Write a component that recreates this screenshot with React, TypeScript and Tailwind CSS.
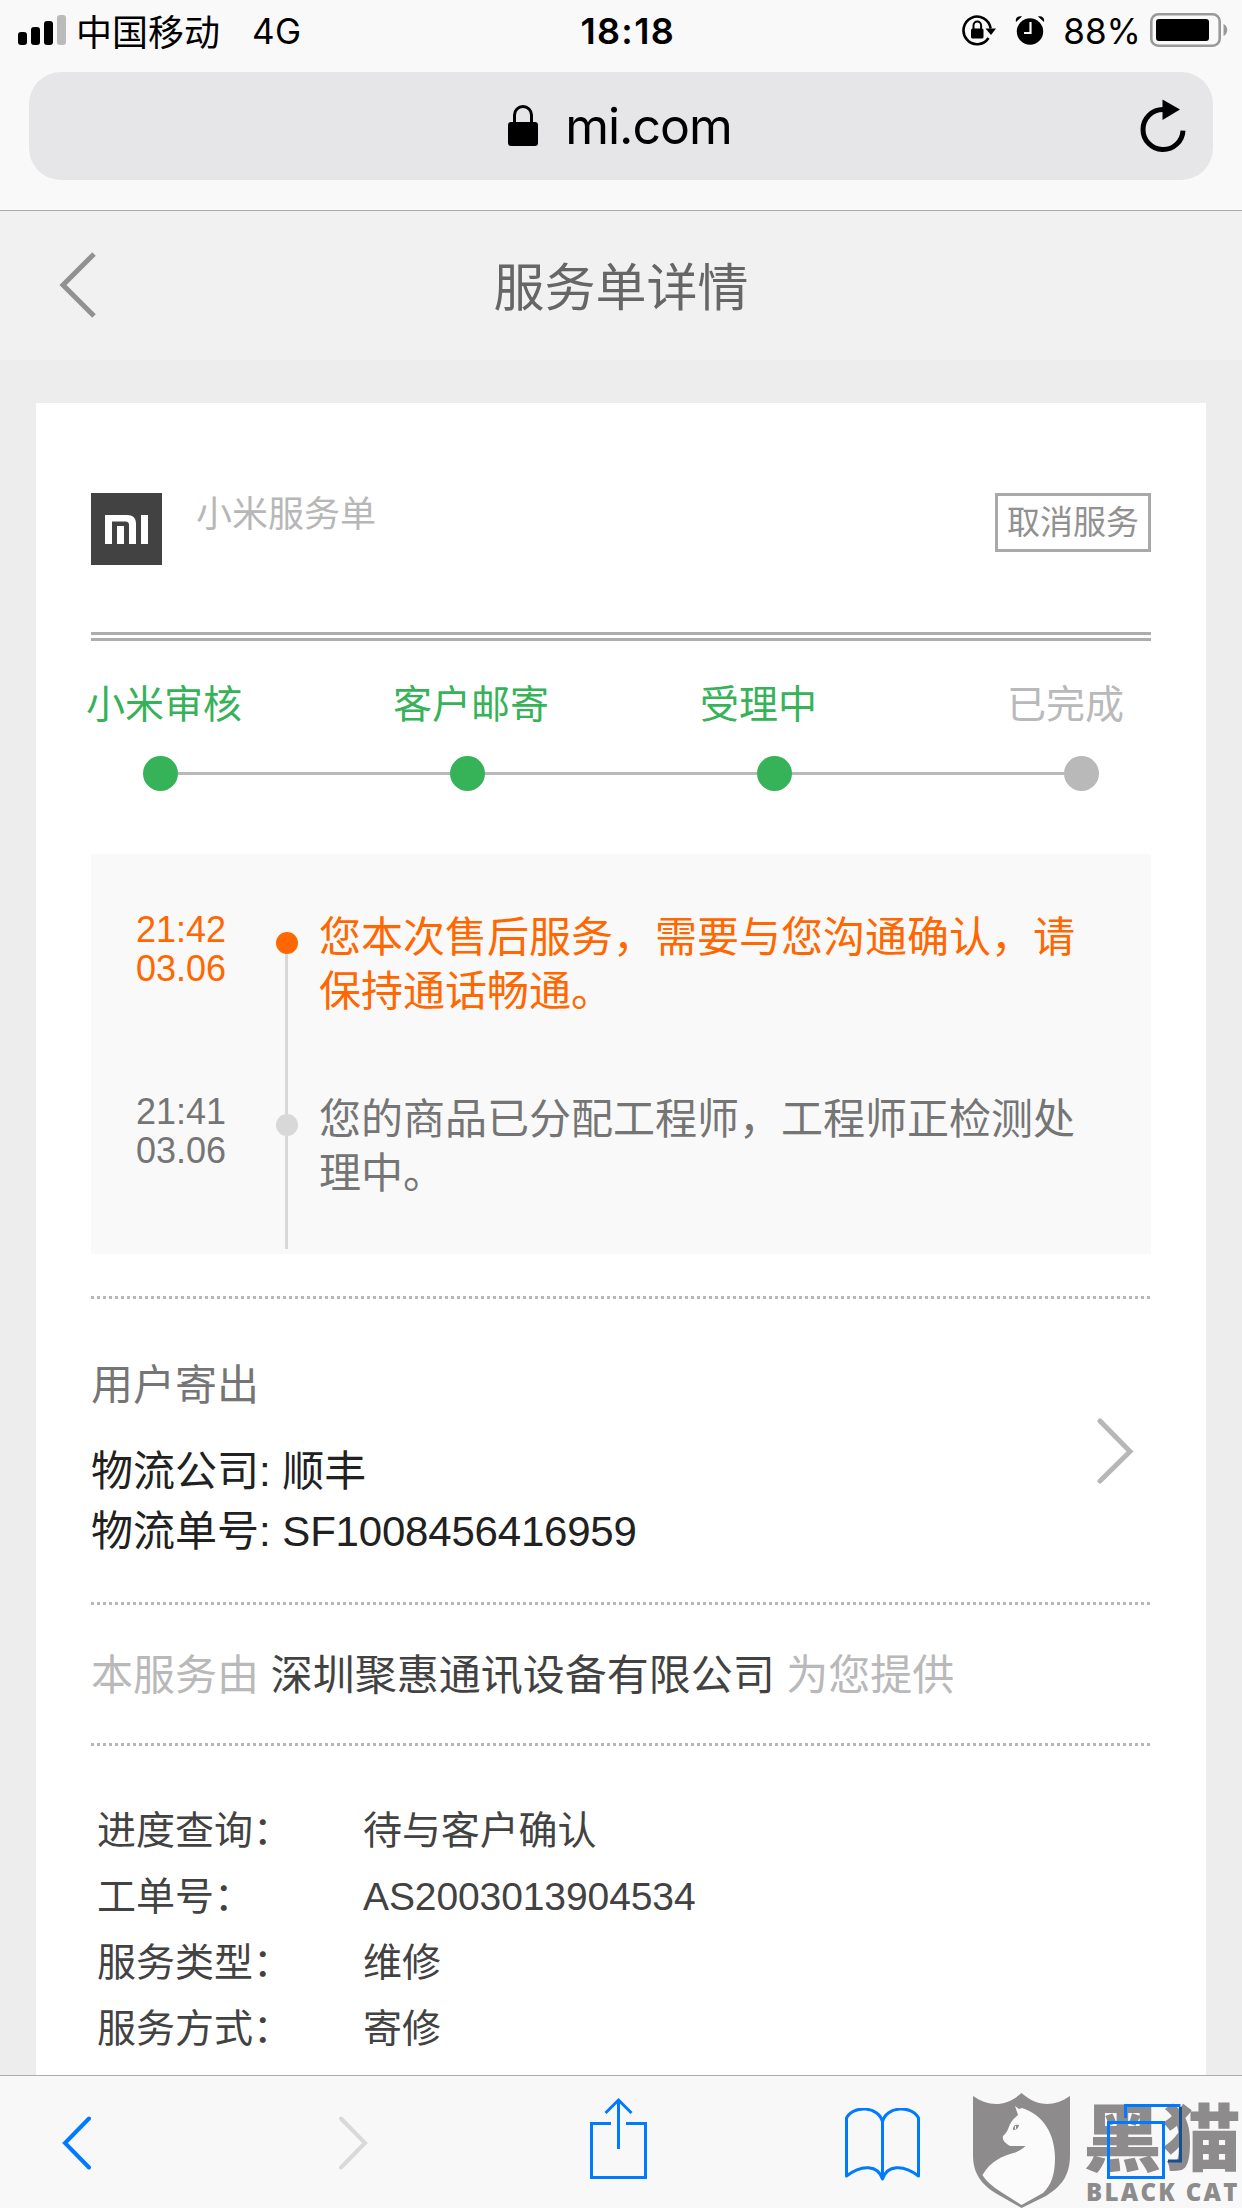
import React from "react";

const steps = [
  { label: "小米审核", done: true },
  { label: "客户邮寄", done: true },
  { label: "受理中", done: true },
  { label: "已完成", done: false },
];

const details = [
  { label: "进度查询：", value: "待与客户确认" },
  { label: "工单号：", value: "AS2003013904534" },
  { label: "服务类型：", value: "维修" },
  { label: "服务方式：", value: "寄修" },
];

function StatusBar() {
  return (
    <div className="flex h-[60px] items-center font-['Inter','Noto_Sans_CJK_SC',sans-serif] text-[36px] leading-[60px] text-black">
      <div className="flex flex-1 items-center pl-[18px]">
        <div className="flex h-[30px] items-end gap-[4px]">
          <span className="h-[13px] w-[9px] rounded-[3px] bg-black" />
          <span className="h-[18px] w-[9px] rounded-[3px] bg-black" />
          <span className="h-[24px] w-[9px] rounded-[3px] bg-black" />
          <span className="h-[30px] w-[9px] rounded-[3px] bg-[#bbbbbb]" />
        </div>
        <span className="ml-[10px] mt-[-1px] font-['Noto_Sans_CJK_SC',sans-serif]">中国移动</span>
        <span className="ml-[32px] mt-[2px] text-[35px] tracking-[0.3px]">4G</span>
      </div>
      <span className="mt-[2px] w-[106px] pl-[10px] text-[36px] font-semibold tracking-[1.3px]">18:18</span>
      <div className="flex flex-1 items-center justify-end pr-[13px]">
        <svg className="h-[32px] w-[36px]" viewBox="0 0 36 32" fill="none">
          <path d="M28.600 14.500A13.600 13.800 0 1 0 26.500 24" stroke="#000" strokeWidth="2.600" />
          <path d="M23.500 14.500h10.500l-5 6.500z" fill="#000" />
          <rect x="9" y="14.500" width="12.500" height="10" rx="1.500" fill="#000" />
          <path d="M11.500 15v-3.500a3.800 4 0 0 1 7.600 0V15" stroke="#000" strokeWidth="2" />
        </svg>
        <svg className="ml-[17px] h-[32px] w-[30px]" viewBox="0 0 30 32">
          <circle cx="15" cy="17.500" r="13.200" />
          <path d="M1 8C0 4 3 1.500 7 2.500z M29 8C30 4 27 1.500 23 2.500z" />
          <path d="M15.500 8v11H9" fill="none" stroke="#f9f9f9" strokeWidth="2.200" />
        </svg>
        <span className="ml-[18px] mt-[2px] text-[35px]">88%</span>
        <svg className="ml-[9px] h-[34px] w-[79px]" viewBox="0 0 79 34">
          <rect x="1.300" y="1.300" width="68.400" height="31.400" rx="7" fill="none" stroke="#999" strokeWidth="2.600" />
          <rect x="6" y="6" width="53" height="22" rx="3" />
          <path d="M73.500 11c5 2 5 10 0 12z" fill="#999" />
        </svg>
      </div>
    </div>
  );
}

function AddressBar() {
  return (
    <div className="mx-[29px] mt-[12px] flex h-[108px] items-center rounded-[32px] bg-[#e6e6e8]">
      <div className="w-[90px]" />
      <div className="flex flex-1 items-center justify-center pr-[2px]">
        <svg className="h-[42px] w-[30px]" viewBox="0 0 30 42">
          <rect y="17" width="30" height="24" rx="3" />
          <path d="M6.500 18v-8a8.500 8.500 0 0 1 17 0v8" fill="none" stroke="#000" strokeWidth="3" />
        </svg>
        <span className="ml-[27px] font-['Inter',sans-serif] text-[50px] leading-[108px] tracking-[-1px] text-black">mi.com</span>
      </div>
      <div className="w-[90px] pl-[17px]">
        <svg className="h-[54px] w-[46px]" viewBox="0 0 46 54">
          <path d="M23 10.500A20 20 0 1 0 43 31.500" fill="none" stroke="#000" strokeWidth="5" />
          <path d="M22.500 0.500v20.500l17.500-10.500z" />
        </svg>
      </div>
    </div>
  );
}

function DottedLine() {
  return <div className="h-[3px] shrink-0 bg-[repeating-linear-gradient(90deg,#b7b7b7_0_3px,transparent_3px_6px)]" />;
}

function MiLogo() {
  return (
    <svg className="h-[72px] w-[71px] bg-[#424242]" viewBox="0 0 71 72" fill="#fff">
      <path d="M14 22h22c6 0 9 3 9 9v20h-7V32c0-2-1-3.500-3.500-3.500H21V51h-7z" />
      <rect x="26" y="33" width="7" height="18" />
      <rect x="50" y="22" width="7" height="29" />
    </svg>
  );
}

function Progress() {
  return (
    <div className="-ml-[5px] mt-[46px] flex h-[167px]">
      {steps.map((step, i) => (
        <div key={step.label} className="w-[307px] shrink-0">
          <p className={`text-[39px] leading-[36px] ${step.done ? "text-[#36b258]" : "text-[#b9b9b9]"}`}>{step.label}</p>
          <div className="ml-[57px] mt-[33px] flex w-[307px] items-center">
            <span className={`h-[35px] w-[35px] rounded-full ${step.done ? "bg-[#36b258]" : "bg-[#b9b9b9]"}`} />
            {i < steps.length - 1 && <span className="h-[3px] flex-1 bg-[#b9b9b9]" />}
          </div>
        </div>
      ))}
    </div>
  );
}

function Timeline() {
  return (
    <div className="flex h-[400px] flex-col bg-[#f9f9f9] pl-[44px] pt-[54px]">
      <div className="flex h-[182px] text-[#ff6700]">
        <p className="w-[141px] pl-px pt-[2px] text-[36px] leading-[39px]">21:42<br />03.06</p>
        <div className="flex w-[22px] flex-col pt-[24px]">
          <span className="h-[22px] w-[22px] rounded-full bg-[#ff6700]" />
          <span className="ml-[9px] w-[3px] flex-1 bg-[#d8d8d8]" />
        </div>
        <p className="ml-[21px] pt-[3px] text-[42px] leading-[54px]">您本次售后服务，需要与您沟通确认，请<br />保持通话畅通。</p>
      </div>
      <div className="flex h-[159px] text-[#757575]">
        <p className="w-[141px] pl-px pt-[2px] text-[36px] leading-[39px]">21:41<br />03.06</p>
        <div className="flex w-[22px] flex-col">
          <span className="ml-[9px] h-[24px] w-[3px] bg-[#d8d8d8]" />
          <span className="h-[22px] w-[22px] rounded-full bg-[#d8d8d8]" />
          <span className="ml-[9px] w-[3px] flex-1 bg-[#d8d8d8]" />
        </div>
        <p className="ml-[21px] pt-[3px] text-[42px] leading-[54px]">您的商品已分配工程师，工程师正检测处<br />理中。</p>
      </div>
    </div>
  );
}

function Watermark() {
  return (
    <div className="flex text-[#8e8b8c]">
      <svg className="mt-[17px] h-[115px] w-[97px]" viewBox="0 0 97 115">
        <path d="M0 3c16 11 33 11 48.500-3C64 14 81 14 97 3v59c0 22-10 32-24 41l-24.500 12L24 101C9 92 0 81 0 62z" fill="#8e8b8c" />
        <path d="M42 13l4 3 3-1c22 7 33 27 33 50 0 17-4 27-12 35l-21.500 12L28 99C19 93 13 88 9.500 82c8-14 20-19 31-22 6-2 9-4 12-7H37c-5-3-8-6-7-10 6-5 5-10 9-15 2-3 4-4 6-6z" fill="#fbfbfb" />
        <path d="M40 35c1-3 3-4 6-3-1 4-3 5-6 5z" fill="#8e8b8c" />
        <path d="M42.500 33v3" stroke="#fff" />
      </svg>
      <div className="ml-[15px] mt-[23px] w-[156px]">
        <p className="-ml-[2px] h-[75px] origin-top-left scale-y-[0.92] whitespace-nowrap font-['Noto_Sans_CJK_SC',sans-serif] text-[79px] font-black leading-[76px]">黑猫</p>
        <p className="mt-[3px] whitespace-nowrap pl-px font-['Open_Sans',sans-serif] text-[24px] font-extrabold leading-[30px] tracking-[2.3px]">BLACK CAT</p>
      </div>
    </div>
  );
}

function Toolbar() {
  return (
    <div className="relative flex h-[133px] shrink-0 overflow-hidden border-t border-[#adadad] bg-[#f8f8f8]">
      <svg className="ml-[62px] mt-[40px] h-[54px] w-[30px]" viewBox="0 0 30 54" fill="none" stroke="#007aff" strokeWidth="4" strokeLinecap="round">
        <path d="M27 2.500L3 27l24 24.500" />
      </svg>
      <svg className="ml-[246px] mt-[40px] h-[54px] w-[30px]" viewBox="0 0 30 54" fill="none" stroke="#d9d9d9" strokeWidth="4" strokeLinecap="round">
        <path d="M3 2.500L27 27 3 51.500" />
      </svg>
      <svg className="ml-[222px] mt-[21px] h-[83px] w-[57px]" viewBox="0 0 57 83" fill="none" stroke="#007aff" strokeWidth="3">
        <path d="M21 26.500H1.500v54h54v-54H36M28.500 52V3M15.500 16l13-13 13 13" />
      </svg>
      <svg className="ml-[198px] mt-[32px] h-[74px] w-[75px]" viewBox="0 0 75 74" fill="none" stroke="#007aff" strokeWidth="3" strokeLinejoin="round">
        <path d="M37.500 71V14C34-2 8-3 1.500 10v58C17 56 33 57 37.500 71 42 57 58 56 73.500 68V10C67-3 41-2 37.500 14" />
      </svg>
      <div className="ml-[53px]">
        <Watermark />
      </div>
      {/* tabs button shows through the watermark */}
      <svg className="absolute left-[1107px] top-[28px] h-[76px] w-[76px]" viewBox="0 0 76 76" fill="none" stroke="#007aff" strokeWidth="3">
        <rect x="1.500" y="18.500" width="55" height="55" />
        <path d="M18.500 14V1.500h55" />
        <path d="M73.500 3v54H61" stroke="#174f8f" />
      </svg>
    </div>
  );
}

export default function App() {
  return (
    <div className="flex h-[2208px] w-[1242px] flex-col overflow-hidden bg-[#ededed] font-['Liberation_Sans','Noto_Sans_CJK_SC',sans-serif]">
      <header className="h-[211px] shrink-0 border-b border-[#a9a9a9] bg-[#f9f9f9]">
        <StatusBar />
        <AddressBar />
      </header>

      <div className="flex h-[149px] shrink-0 items-center bg-[#f1f1f1]">
        <svg className="ml-[59px] mt-[-2px] h-[66px] w-[38px]" viewBox="0 0 38 66" fill="none" stroke="#919191" strokeWidth="5">
          <path d="M35 2L4 33l31 31" />
        </svg>
        <h1 className="flex-1 pr-[97px] pt-[6px] text-center text-[51px] leading-[60px] text-[#666666]">服务单详情</h1>
      </div>

      <main className="mx-[36px] mt-[43px] flex-1 overflow-hidden bg-white px-[55px] pt-[90px]">
        <div className="flex h-[148px] items-start border-b-[9px] border-double border-[#adadad]">
          <MiLogo />
          <span className="ml-[34px] mt-[2px] text-[36px] leading-[40px] text-[#b7b7b7]">小米服务单</span>
          <button className="ml-auto h-[59px] w-[156px] border-[3px] border-[#a9a9a9] text-[33px] leading-[52px] text-[#919191]">取消服务</button>
        </div>

        <Progress />
        <Timeline />

        <div className="mt-[42px]">
          <DottedLine />
        </div>
        <div className="flex h-[303px] items-center justify-between">
          <div className="pt-[17px] text-[42px] leading-[60px] text-[#212121]">
            <p className="mb-[26px] text-[#757575]">用户寄出</p>
            <p>物流公司: 顺丰</p>
            <p>物流单号: <span className="tracking-[-0.2px]">SF1008456416959</span></p>
          </div>
          <svg className="mr-[17px] h-[66px] w-[38px]" viewBox="0 0 38 66" fill="none" stroke="#b7b7b7" strokeWidth="5" strokeLinecap="round">
            <path d="M4 3l30 30.500L4 63" />
          </svg>
        </div>
        <DottedLine />
        <p className="h-[138px] pt-[2px] text-[42px] leading-[138px] text-[#b9b9b9]">
          本服务由 <span className="text-[#424242]">深圳聚惠通讯设备有限公司</span> 为您提供
        </p>
        <DottedLine />

        <dl className="mt-[52px] pl-[6px] text-[39px] leading-[66px] text-[#424242]">
          {details.map((row) => (
            <div key={row.label} className="flex">
              <dt className="w-[266px]">{row.label}</dt>
              <dd className="tracking-[-0.1px]">{row.value}</dd>
            </div>
          ))}
        </dl>
      </main>

      <Toolbar />
    </div>
  );
}
